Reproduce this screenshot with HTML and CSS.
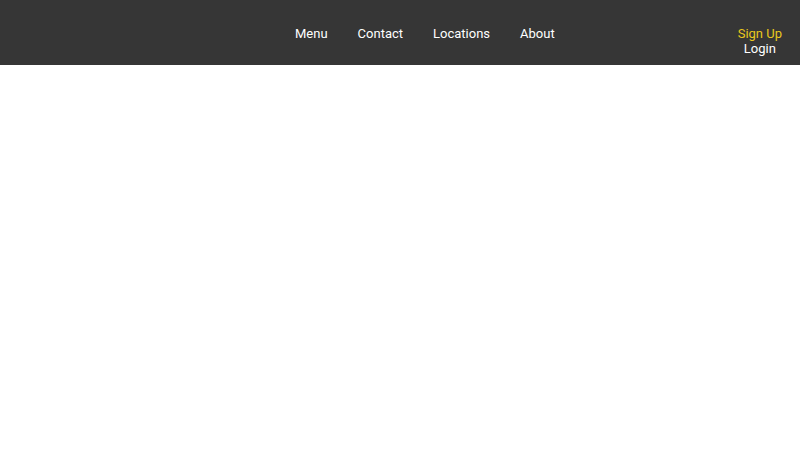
FILE: index.html
```html
<!DOCTYPE html>
<html>
<head>
<meta charset="utf-8">
<link rel="stylesheet" href="styles.css">
</head>
<body>
<header class="topbar">
  <nav class="nav">
    <a class="nav-link" href="#">Menu</a>
    <a class="nav-link" href="#">Contact</a>
    <a class="nav-link" href="#">Locations</a>
    <a class="nav-link" href="#">About</a>
  </nav>
  <div class="auth">
    <a class="auth-link signup" href="#">Sign Up</a>
    <a class="auth-link" href="#">Login</a>
  </div>
</header>
<main class="content"></main>
</body>
</html>
```
FILE: styles.css
```css
* { box-sizing: border-box; }
html, body {
  margin: 0;
  padding: 0;
  background: #ffffff;
  font-family: Roboto, "Liberation Sans", Arial, sans-serif;
}
.topbar {
  height: 65px;
  background: #363636;
  display: flex;
  align-items: center;
  padding: 2px 18px 0;
}
.nav {
  display: flex;
  margin-left: 262px;
}
.nav-link {
  color: #ffffff;
  text-decoration: none;
  font-size: 13px;
  line-height: 16px;
  padding: 0 15px;
}
.auth {
  margin-left: auto;
  align-self: flex-start;
  padding-top: 24px;
  display: flex;
  flex-direction: column;
  align-items: center;
}
.auth-link {
  color: #ffffff;
  text-decoration: none;
  font-size: 13px;
  line-height: 15px;
}
.auth-link.signup {
  color: #e8c81c;
}
```
